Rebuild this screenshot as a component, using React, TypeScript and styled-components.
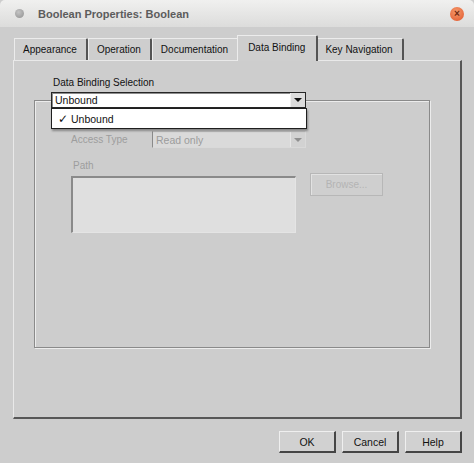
import React from "react";
import styled, { createGlobalStyle } from "styled-components";

const GlobalStyle = createGlobalStyle`
    html, body {
        margin: 0;
        padding: 0;
        background: #cdcdcd;
    }
    body {
        font-family: "Liberation Sans", Arial, sans-serif;
        font-size: 10px;
        color: #111;
    }
`;

const Window = styled.div`
    width: 474px;
    height: 463px;
    display: flex;
    flex-direction: column;
    background: #cdcdcd;
    overflow: hidden;
`;

const TitleBar = styled.div`
    height: 27px;
    flex-shrink: 0;
    display: flex;
    align-items: center;
    padding: 0 10px 0 15px;
    background: linear-gradient(#f0f0ef, #dcdcdb);
    border-radius: 5px 5px 0 0;
`;

const WindowDot = styled.span`
    width: 9px;
    height: 9px;
    border-radius: 50%;
    background: radial-gradient(circle at 40% 35%, #c4c4c4, #8f8f8f);
    margin-right: 14px;
`;

const Title = styled.div`
    flex: 1;
    font-weight: bold;
    font-size: 11px;
    color: #5c5c5c;
`;

const CloseButton = styled.span`
    width: 14px;
    height: 14px;
    border-radius: 50%;
    background: radial-gradient(circle at 45% 35%, #f59a6c, #e0552a);
    color: #6e2a12;
    font-size: 10px;
    font-weight: bold;
    line-height: 14px;
    text-align: center;
`;

const Body = styled.div`
    flex: 1;
    display: flex;
    flex-direction: column;
    padding: 8px 12px 0 13px;
`;

const TabStrip = styled.div`
    display: flex;
    align-items: flex-end;
    height: 25px;
    padding-left: 1px;
`;

const Tab = styled.div<{ $active?: boolean }>`
    position: relative;
    z-index: ${(p) => (p.$active ? 2 : 1)};
    box-sizing: border-box;
    height: ${(p) => (p.$active ? 26 : 22)}px;
    margin: ${(p) => (p.$active ? "0 -2px -1px" : "0")};
    padding: ${(p) => (p.$active ? "0 11px 2px 10px" : "0 9px 0 8px")};
    display: flex;
    align-items: center;
    white-space: nowrap;
    background: #cecece;
    border-top: 1px solid #ececec;
    border-left: 1px solid #ececec;
    border-right: 2px solid #545454;
    border-top-right-radius: 2px;
`;

const Panel = styled.div`
    position: relative;
    z-index: 0;
    box-sizing: border-box;
    height: 359px;
    padding: 16px 30px 0 20px;
    background: #cdcdcd;
    border-top: 1px solid #e9e9e9;
    border-left: 1px solid #e9e9e9;
    border-right: 2px solid #575757;
    border-bottom: 2px solid #575757;
`;

const SelectionLabel = styled.div`
    margin-left: 19px;
    line-height: 12px;
    margin-bottom: 3px;
`;

const Group = styled.fieldset`
    margin: 0;
    padding: 0;
    min-width: 0;
    border: 1px solid #8a8a8a;
    box-shadow: 1px 1px 0 #ececec, inset 1px 1px 0 #ececec;
`;

const GroupLegend = styled.legend`
    position: relative;
    padding: 0;
    margin-left: 16px;
`;

const Combo = styled.div<{ $disabled?: boolean; $width: number; $height: number }>`
    box-sizing: border-box;
    display: flex;
    width: ${(p) => p.$width}px;
    height: ${(p) => p.$height}px;
    background: ${(p) => (p.$disabled ? "#dadada" : "#fff")};
    color: ${(p) => (p.$disabled ? "#9c9c9c" : "#111")};
    border: 1px solid ${(p) => (p.$disabled ? "#d9d9d9" : "#262626")};
    border-left-color: ${(p) => (p.$disabled ? "#8a8a8a" : "#262626")};
    border-top-color: ${(p) => (p.$disabled ? "#c2c2c2" : "#262626")};
    box-shadow: ${(p) => (p.$disabled ? "none" : "inset 1px 1px 0 #8c8c8c")};
`;

const ComboText = styled.div`
    flex: 1;
    display: flex;
    align-items: center;
    padding-left: 3px;
    font-size: 10.5px;
`;

const ComboArrow = styled.div<{ $disabled?: boolean }>`
    width: 14px;
    display: flex;
    align-items: center;
    justify-content: center;
    background: ${(p) => (p.$disabled ? "#d2d2d2" : "#dcdcdc")};
    border-left: 1px solid ${(p) => (p.$disabled ? "#e6e6e6" : "#f2f2f2")};

    &::after {
        content: "";
        border-left: 4px solid transparent;
        border-right: 4px solid transparent;
        border-top: 4px solid ${(p) => (p.$disabled ? "#909090" : "#111")};
    }
`;

const Popup = styled.div`
    position: absolute;
    z-index: 5;
    top: 100%;
    left: 0;
    box-sizing: border-box;
    width: 256px;
    height: 21px;
    display: flex;
    align-items: center;
    padding-left: 6px;
    background: #fff;
    border: 1px solid #1f1f1f;
    box-shadow: 1px 2px 2px rgba(0, 0, 0, 0.35);
    font-size: 10.5px;
`;

const Check = styled.span`
    font-family: "DejaVu Sans", sans-serif;
    font-size: 12px;
    font-weight: bold;
    width: 13px;
    line-height: 12px;
`;

const GroupContent = styled.div`
    padding: 23px 0 114px 36px;
`;

const AccessRow = styled.div`
    display: flex;
    align-items: center;
`;

const DisabledLabel = styled.div<{ $width?: number }>`
    color: #9d9d9d;
    line-height: 12px;
    width: ${(p) => (p.$width ? `${p.$width}px` : "auto")};
`;

const PathRow = styled.div`
    display: flex;
    align-items: flex-start;
    margin-top: 12px;
`;

const PathColumn = styled.div`
    display: flex;
    flex-direction: column;
`;

const PathLabel = styled(DisabledLabel)`
    margin: 0 0 4px 2px;
`;

const PathBox = styled.div`
    box-sizing: border-box;
    width: 225px;
    height: 57px;
    background: #dfdfdf;
    border-top: 2px solid #8a8a8a;
    border-left: 2px solid #8a8a8a;
    border-right: 1px solid #e4e4e4;
    border-bottom: 1px solid #e4e4e4;
`;

const BrowseButton = styled.div`
    box-sizing: border-box;
    width: 73px;
    height: 23px;
    margin: 13px 0 0 14px;
    display: flex;
    align-items: center;
    justify-content: center;
    color: #b4b4b4;
    background: #cfcfcf;
    border: 1px solid #b7b7b7;
    box-shadow: inset 1px 1px 0 #e2e2e2;
`;

const ButtonRow = styled.div`
    display: flex;
    justify-content: flex-end;
    gap: 6px;
    margin-top: 12px;
`;

const DialogButton = styled.div`
    box-sizing: border-box;
    width: 57px;
    height: 22px;
    display: flex;
    align-items: center;
    justify-content: center;
    background: #d1d1d1;
    border-top: 1px solid #efefef;
    border-left: 1px solid #efefef;
    border-right: 2px solid #454545;
    border-bottom: 2px solid #454545;
    font-size: 10.5px;
`;

const tabs = ["Appearance", "Operation", "Documentation", "Data Binding", "Key Navigation"];

export default function App() {
    return (
        <>
            <GlobalStyle />
            <Window>
                <TitleBar>
                    <WindowDot />
                    <Title>Boolean Properties: Boolean</Title>
                    <CloseButton>×</CloseButton>
                </TitleBar>
                <Body>
                    <TabStrip>
                        {tabs.map((t) => (
                            <Tab key={t} $active={t === "Data Binding"}>
                                {t}
                            </Tab>
                        ))}
                    </TabStrip>
                    <Panel>
                        <SelectionLabel>Data Binding Selection</SelectionLabel>
                        <Group>
                            <GroupLegend>
                                <Combo $width={255} $height={16}>
                                    <ComboText>Unbound</ComboText>
                                    <ComboArrow />
                                </Combo>
                                <Popup>
                                    <Check>✓</Check>
                                    Unbound
                                </Popup>
                            </GroupLegend>
                            <GroupContent>
                                <AccessRow>
                                    <DisabledLabel $width={81}>Access Type</DisabledLabel>
                                    <Combo $disabled $width={154} $height={17}>
                                        <ComboText>Read only</ComboText>
                                        <ComboArrow $disabled />
                                    </Combo>
                                </AccessRow>
                                <PathRow>
                                    <PathColumn>
                                        <PathLabel>Path</PathLabel>
                                        <PathBox />
                                    </PathColumn>
                                    <BrowseButton>Browse...</BrowseButton>
                                </PathRow>
                            </GroupContent>
                        </Group>
                    </Panel>
                    <ButtonRow>
                        <DialogButton>OK</DialogButton>
                        <DialogButton>Cancel</DialogButton>
                        <DialogButton>Help</DialogButton>
                    </ButtonRow>
                </Body>
            </Window>
        </>
    );
}
